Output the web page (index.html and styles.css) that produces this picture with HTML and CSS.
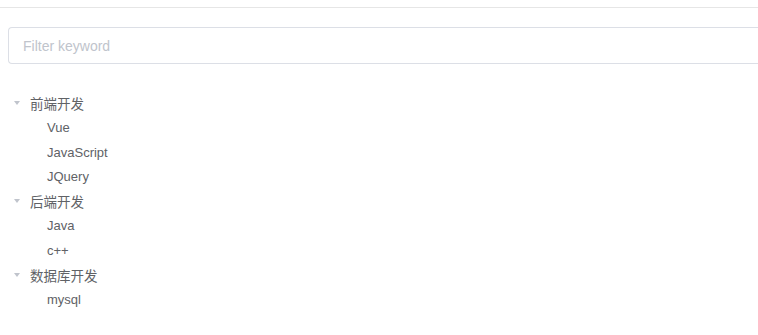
FILE: index.html
```html
<!DOCTYPE html>
<html lang="en">
<head>
    <meta charset="UTF-8">
    <title>Tree Filter</title>
    <link rel="stylesheet" href="styles.css">
</head>
<body>
    <div class="top-bar"></div>

    <div class="filter">
        <input type="text" class="filter-input" placeholder="Filter keyword">
    </div>

    <ul class="tree">
        <li class="tree-node">
            <div class="node-content"><span class="caret"></span><span class="label">前端开发</span></div>
            <ul class="children">
                <li class="node-content child"><span class="label">Vue</span></li>
                <li class="node-content child"><span class="label">JavaScript</span></li>
                <li class="node-content child"><span class="label">JQuery</span></li>
            </ul>
        </li>
        <li class="tree-node">
            <div class="node-content"><span class="caret"></span><span class="label">后端开发</span></div>
            <ul class="children">
                <li class="node-content child"><span class="label">Java</span></li>
                <li class="node-content child"><span class="label">c++</span></li>
            </ul>
        </li>
        <li class="tree-node">
            <div class="node-content"><span class="caret"></span><span class="label">数据库开发</span></div>
            <ul class="children">
                <li class="node-content child"><span class="label">mysql</span></li>
            </ul>
        </li>
    </ul>
</body>
</html>
```

FILE: styles.css
```css
* {
    margin: 0;
    padding: 0;
    box-sizing: border-box;
}

body {
    background: #fff;
    font-family: "Liberation Sans", Arial, "Noto Sans CJK SC", sans-serif;
    color: #606266;
    overflow: hidden;
}

.top-bar {
    height: 8px;
    border-bottom: 1px solid #e6e6e6;
}

.filter {
    padding: 19px 0 0 8px;
}

.filter-input {
    display: block;
    width: 100%;
    height: 37px;
    padding: 0 14px;
    border: 1px solid #dcdfe6;
    border-right: none;
    border-radius: 4px 0 0 4px;
    font-family: inherit;
    font-size: 14px;
    color: #606266;
    outline: none;
}

.filter-input::placeholder {
    color: #c0c4cc;
}

.tree {
    list-style: none;
    margin-top: 27px;
}

.children {
    list-style: none;
}

.node-content {
    display: flex;
    align-items: center;
    height: 24.5px;
    padding-left: 14px;
    font-size: 13px;
}

.node-content.child {
    padding-left: 47px;
}

.caret {
    width: 0;
    height: 0;
    border-left: 3.5px solid transparent;
    border-right: 3.5px solid transparent;
    border-top: 4px solid #c0c4cc;
    margin-right: 9px;
}

.tree-node > .node-content .label {
    margin-left: 1px;
    font-size: 13.5px;
}
```
